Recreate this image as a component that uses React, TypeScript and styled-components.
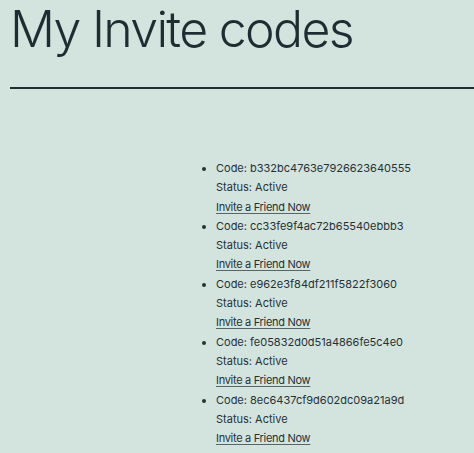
import React from "react";
import styled, { createGlobalStyle } from "styled-components";

const Global = createGlobalStyle`
  html, body { margin: 0; padding: 0; background: #d3e4df; }
  body { font-family: Inter, "Noto Sans", sans-serif; color: #1f2d33; }
`;

const Page = styled.div`
  padding: 0 0 0 10px;
`;

const Title = styled.h1`
  margin: 0;
  font-size: 50px;
  font-weight: 300;
  line-height: 58px;
  letter-spacing: -1.7px;
  color: #1f2d33;
`;

const Rule = styled.hr`
  margin: 29px 0 0 0;
  border: none;
  height: 2px;
  background: #1f2d33;
`;

const List = styled.ul`
  margin: 70px 0 0 0;
  padding: 0 0 0 206px;
  list-style: disc;
  font-size: 11px;
  line-height: 19.3px;
  color: #263135;
`;

const Item = styled.li``;

const Line = styled.div``;

const Link = styled.a`
  color: #263135;
  letter-spacing: -0.3px;
  text-decoration: underline;
  text-decoration-color: #5a6468;
  text-underline-offset: 2px;
  cursor: pointer;
`;

const codes = [
  "b332bc4763e7926623640555",
  "cc33fe9f4ac72b65540ebbb3",
  "e962e3f84df211f5822f3060",
  "fe05832d0d51a4866fe5c4e0",
  "8ec6437cf9d602dc09a21a9d",
];

export default function App() {
  return (
    <>
      <Global />
      <Page>
        <Title>My Invite codes</Title>
        <Rule />
        <List>
          {codes.map((c) => (
            <Item key={c}>
              <Line>Code: {c}</Line>
              <Line>Status: Active</Line>
              <Line>
                <Link>Invite a Friend Now</Link>
              </Line>
            </Item>
          ))}
        </List>
      </Page>
    </>
  );
}
